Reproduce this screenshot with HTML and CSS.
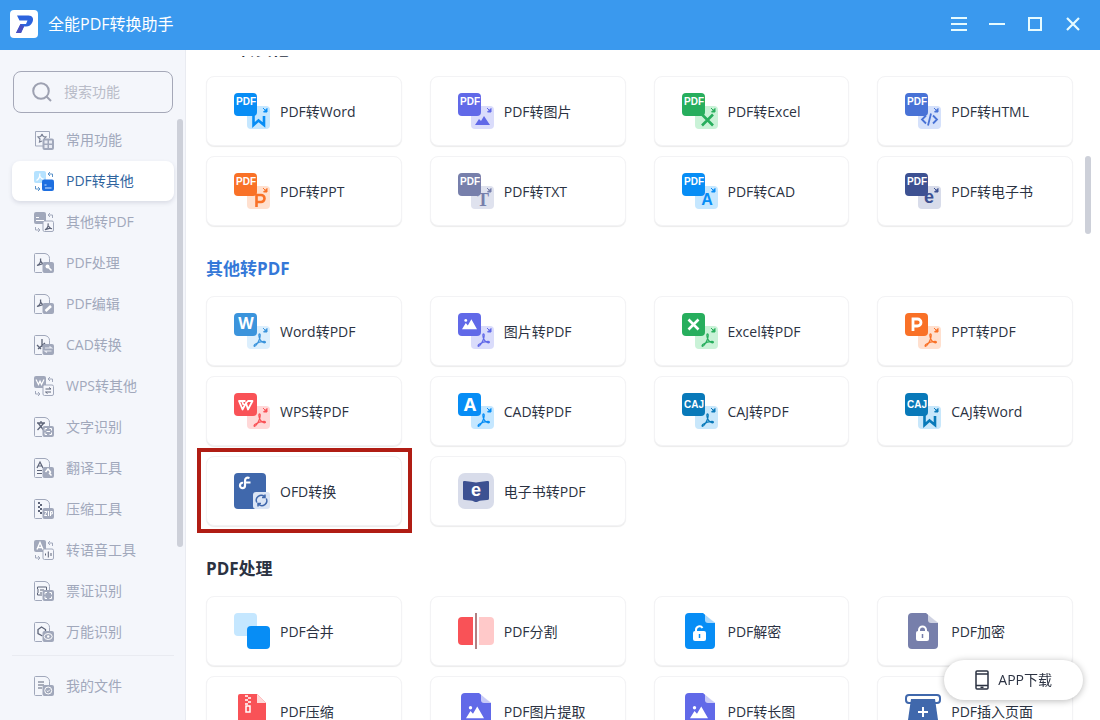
FILE: index.html
```html
<!DOCTYPE html>
<html lang="zh-CN">
<head>
    <meta charset="UTF-8">
    <meta name="viewport" content="width=device-width, initial-scale=1.0">
    <title>全能PDF转换助手</title>
    <link rel="stylesheet" href="styles.css">
</head>
<body>

    <!-- 图标 -->
    <svg class="sprite" aria-hidden="true">
        <symbol id="tile" viewBox="0 0 36 36">
            <rect class="pale" x="13" y="13" width="23" height="23" rx="4"/>
            <rect x="0" y="0" width="23" height="23" rx="4" fill="currentColor"/>
            <path d="M29 15l2.500 2.500M33 15.500v3.500h-3.500z" fill="currentColor" stroke="currentColor" stroke-width="1"/>
        </symbol>
        <symbol id="acrobat" viewBox="0 0 36 36">
            <path d="M25.800 21c-1.500-.5-1 3 .2 5.500 1 2 3 3.200 4.500 3.300 1.300 0 1.300-1.500-.5-1.500-3 0-6 .8-8.500 2.700-1.500 1-1.800 2.200-1 2.400 1.500 0 4-4.500 5-7.400.6-2 1-4.700.3-5z" fill="none" stroke="currentColor" stroke-width="1.200"/>
        </symbol>
        <symbol id="word" viewBox="0 0 36 36">
            <path d="M19.500 21.500V32l5-4.500 5.500 4.500V23" fill="none" stroke="currentColor" stroke-width="2.600"/>
        </symbol>
        <symbol id="hills" viewBox="0 0 16 12">
            <circle cx="4" cy="2.200" r="1.500" fill="currentColor"/>
            <path d="M0 11.500l4-6.500 2.200 2.600L10 1l6 10.500z" fill="currentColor"/>
        </symbol>
        <symbol id="sheet" viewBox="0 0 36 36">
            <path d="M7 0h14l12 10v22a4 4 0 0 1-4 4H7a4 4 0 0 1-4-4V4a4 4 0 0 1 4-4z" fill="currentColor"/>
            <path class="fold" d="M23 0l10 10h-7a3 3 0 0 1-3-3z"/>
        </symbol>
        <!-- 侧栏图标底板 -->
        <symbol id="s-doc" viewBox="0 0 20 20">
            <path d="M8 19.500H1.500a1 1 0 0 1-1-1v-17a1 1 0 0 1 1-1H11q4.500 1 4.500 5V9" fill="none" stroke="currentColor"/>
            <rect x="8.500" y="9" width="11.500" height="11" rx="2" fill="currentColor"/>
        </symbol>
        <symbol id="s-swap" viewBox="0 0 20 20">
            <rect x="0" y="0" width="12" height="12" rx="2" fill="currentColor"/>
            <path d="M14 3h4.500v3M16 1l-2 2 2 2M6 18H1.500v-3M4 16l2 2-2 2" fill="none" stroke="currentColor"/>
        </symbol>
        <symbol id="s-box" viewBox="0 0 20 20">
            <rect x="9" y="9" width="10.500" height="10.500" rx="1.500" fill="#f5f6fb" stroke="currentColor"/>
        </symbol>
        <symbol id="s-acro" viewBox="0 0 10 10">
            <path d="M1 8.500C4 7 5 4 4.500 1.500M5 4.500c1 2 2 3 4 3M1.500 8.500l6-2" fill="none" stroke="#5d6478" stroke-width="1.300"/>
        </symbol>
    </svg>

    <header class="titlebar">
        <svg class="logo" viewBox="0 0 28 28" aria-hidden="true">
            <rect width="28" height="28" rx="4" fill="#fff"/>
            <path d="M7 5.500h11.500c4 0 5.500 3 4 6.500-1.300 3-3.500 4.500-6.500 4.500h-2L11 23H6l4.500-9H16l1.500-3.500H9.500z" fill="#2d63dd"/>
            <path d="M10.500 14L6 23h5l3-6.500z" fill="#4b4fc0"/>
        </svg>
        <h1>全能PDF转换助手</h1>
        <div class="window-buttons">
            <button type="button" aria-label="菜单"><svg viewBox="0 0 16 16"><path d="M0 2h16M0 8h16M0 14h16" stroke-width="2.200"/></svg></button>
            <button type="button" aria-label="最小化"><svg viewBox="0 0 16 16"><path d="M0 8h16" stroke-width="2"/></svg></button>
            <button type="button" aria-label="最大化"><svg viewBox="0 0 16 16"><path d="M2 2h12v12H2z" stroke-width="2"/></svg></button>
            <button type="button" aria-label="关闭"><svg viewBox="0 0 16 16"><path d="M2 2l12 12M14 2L2 14" stroke-width="2.200"/></svg></button>
        </div>
    </header>

    <div class="layout">
        <aside class="sidebar">
            <label class="search">
                <svg viewBox="0 0 20 20" aria-hidden="true"><circle cx="9" cy="9" r="7.800"/><path d="M14.500 14.500l4.500 4.500"/></svg>
                <input type="text" placeholder="搜索功能" aria-label="搜索功能">
            </label>

            <nav class="menu">
                <a href="#common">
                    <svg viewBox="0 0 20 20"><path d="M9 16H1.500V1.500h14V8" fill="none" stroke="currentColor"/><path d="M8 4l1.300 2.500 2.700.4-2 2M8 4L6.700 6.500 4 7l2 2-.5 3L8 11" fill="none" stroke="#7b8296" stroke-width="1.200"/><rect x="8.500" y="8.500" width="11.500" height="11.500" rx="2" fill="currentColor"/><path d="M10.500 10.500h3v3h-3zM15 10.500h3v3h-3zM10.500 15h3v3h-3zM15 15h3v3h-3z" fill="#e9ebf3"/></svg>
                    常用功能
                </a>
                <a href="#from-pdf" class="active">
                    <svg viewBox="0 0 20 20"><rect width="12" height="12" rx="2" fill="#b5e2ff"/><path d="M2.500 9.500C5 8 6 5 5.800 2.500M6 5.500c1 2 2 2.500 4 2.800" fill="none" stroke="#fff" stroke-width="1.300"/><path d="M14 3h4.500v3M16 1l-2 2 2 2M6 18H1.500v-3M4 16l2 2-2 2" fill="none" stroke="#5b92c9"/><rect x="8" y="8.500" width="12" height="11.500" rx="2" fill="#1e6fe0"/><path d="M10.500 14h2M11 17h6.500" stroke="#d5e8ff"/></svg>
                    PDF转其他
                </a>
                <a href="#to-pdf">
                    <svg viewBox="0 0 20 20"><use href="#s-swap"/><use href="#s-box"/><path d="M2 5.500h3M2 8.500h8" stroke="#fff"/><use href="#s-acro" x="10" y="10" width="9" height="9"/></svg>
                    其他转PDF
                </a>
                <a href="#process">
                    <svg viewBox="0 0 20 20"><use href="#s-acro" x="2" y="4" width="10" height="10"/><use href="#s-doc"/><circle cx="13.500" cy="13.500" r="2" fill="#fff"/><path d="M14 14l3.500 3.500" stroke="#fff" stroke-width="1.600"/></svg>
                    PDF处理
                </a>
                <a href="#edit">
                    <svg viewBox="0 0 20 20"><use href="#s-acro" x="2" y="4" width="10" height="10"/><use href="#s-doc"/><path d="M11.500 17l5.500-5" stroke="#fff" stroke-width="2.600"/></svg>
                    PDF编辑
                </a>
                <a href="#cad">
                    <svg viewBox="0 0 20 20"><path d="M8 4v8M3 10l4 4M4 14l7-6" fill="none" stroke="#5d6478" stroke-width="1.300"/><use href="#s-doc"/><path d="M11 13h6.500l-2-1.500M17.500 16H11l2 1.500" fill="none" stroke="#e9ebf3" stroke-width="1.200"/></svg>
                    CAD转换
                </a>
                <a href="#wps">
                    <svg viewBox="0 0 20 20"><use href="#s-swap"/><use href="#s-box"/><path d="M2 3.500l2.500 5L6 5l1.500 3.500L10 3.500" fill="none" stroke="#fff" stroke-width="1.200"/><path d="M11.500 13H17l-2-1.500M17 16h-5.500l2 1.500" fill="none" stroke="#5d6478"/></svg>
                    WPS转其他
                </a>
                <a href="#ocr">
                    <svg viewBox="0 0 20 20"><path d="M3 6h8M7 4v2M4.500 6.500L9.500 13M9.500 6.500L3.500 13" stroke="#5d6478" stroke-width="1.300"/><use href="#s-doc"/><path d="M11 13.500V11.500h2M15.500 11.500h2v2M17.500 15.500v2h-2M13 17.500h-2v-2M12.500 14.500h3.500" fill="none" stroke="#fff"/></svg>
                    文字识别
                </a>
                <a href="#translate">
                    <svg viewBox="0 0 20 20"><path d="M3 10l3-6 3 6M4.200 8h3.600M3 12.500h5M3 15.500h5" fill="none" stroke="#5d6478" stroke-width="1.200"/><use href="#s-doc"/><path d="M11.500 14l2.500-3 2.500 3-1 1.500 2 2" fill="none" stroke="#fff" stroke-width="1.500"/></svg>
                    翻译工具
                </a>
                <a href="#compress">
                    <svg viewBox="0 0 20 20"><path d="M4 4h2M6 6h2M4 8h2M6 10h2M4 12h2M6 14h2" stroke="#5d6478" stroke-width="2"/><use href="#s-doc"/><path d="M10.500 12.500h2.500l-2.500 4H13M14.500 12v5M16.500 17v-4.500h1.800v2.500h-1.800" fill="none" stroke="#fff"/></svg>
                    压缩工具
                </a>
                <a href="#speech">
                    <svg viewBox="0 0 20 20"><use href="#s-swap"/><use href="#s-box"/><path d="M3 9.500l3-7 3 7M4.200 7.500h3.600" fill="none" stroke="#fff" stroke-width="1.400"/><path d="M11.500 13.500v2M14.300 11.500v6M17 13v3" stroke="#5d6478"/></svg>
                    转语音工具
                </a>
                <a href="#ticket">
                    <svg viewBox="0 0 20 20"><path d="M12.500 9V6H3.500v2l1 1-1 1 1 1-1 1v2H8M6 9h4M6 12h2" fill="none" stroke="#5d6478"/><use href="#s-doc"/><path d="M11 13.500V11.500h2M15.500 11.500h2v2M17.500 15.500v2h-2M13 17.500h-2v-2" fill="none" stroke="#fff"/></svg>
                    票证识别
                </a>
                <a href="#universal">
                    <svg viewBox="0 0 20 20"><path d="M8.500 14L4 11.500V7.500L7.500 5l4 2.500V9" fill="none" stroke="#5d6478" stroke-width="1.300"/><use href="#s-doc"/><ellipse cx="14.200" cy="14.500" rx="4" ry="3" fill="none" stroke="#fff"/><circle cx="14.200" cy="14.500" r="1.200" fill="#fff"/></svg>
                    万能识别
                </a>
            </nav>

            <div class="menu my-files">
                <a href="#files">
                    <svg viewBox="0 0 20 20"><path d="M4 6h6M4 9h6M4 12h4" stroke="#5d6478"/><use href="#s-doc"/><circle cx="14.200" cy="14.500" r="3.500" fill="none" stroke="#fff"/><path d="M12.700 14.500l1.200 1.200 2-2" fill="none" stroke="#fff"/></svg>
                    我的文件
                </a>
            </div>
            <div class="scrollbar side-bar"></div>
        </aside>

        <main class="content">
            <section class="scrolled" id="from-pdf">
                <h2>PDF转其他</h2>
                <div class="cards">
                    <button type="button" class="card azure">
                        <svg viewBox="0 0 36 36"><use href="#tile"/><text x="12" y="12">PDF</text><use href="#word"/></svg>
                        <span>PDF转Word</span>
                    </button>
                    <button type="button" class="card indigo">
                        <svg viewBox="0 0 36 36"><use href="#tile"/><text x="12" y="12">PDF</text><path d="M17 32l4-6 2 2 3-5 6 9z" fill="currentColor"/></svg>
                        <span>PDF转图片</span>
                    </button>
                    <button type="button" class="card green">
                        <svg viewBox="0 0 36 36"><use href="#tile"/><text x="12" y="12">PDF</text><path d="M20 21.500l11 11M31 21.500l-11 11" stroke="currentColor" stroke-width="2.600"/></svg>
                        <span>PDF转Excel</span>
                    </button>
                    <button type="button" class="card blue">
                        <svg viewBox="0 0 36 36"><use href="#tile"/><text x="12" y="12">PDF</text><path d="M21 22.500l-4 4 4 4M28 22.500l4 4-4 4M26 20.500l-3 12" fill="none" stroke="currentColor" stroke-width="1.800"/></svg>
                        <span>PDF转HTML</span>
                    </button>
                    <button type="button" class="card orange">
                        <svg viewBox="0 0 36 36"><use href="#tile"/><text x="12" y="12">PDF</text><path d="M22.500 34V22H27a3.500 3.500 0 0 1 0 7h-4" fill="none" stroke="currentColor" stroke-width="2.600"/></svg>
                        <span>PDF转PPT</span>
                    </button>
                    <button type="button" class="card slate">
                        <svg viewBox="0 0 36 36"><use href="#tile"/><text x="12" y="12">PDF</text><text class="glyph serif" x="25" y="33">T</text></svg>
                        <span>PDF转TXT</span>
                    </button>
                    <button type="button" class="card azure">
                        <svg viewBox="0 0 36 36"><use href="#tile"/><text x="12" y="12">PDF</text><text class="glyph" x="25" y="32">A</text></svg>
                        <span>PDF转CAD</span>
                    </button>
                    <button type="button" class="card navy">
                        <svg viewBox="0 0 36 36"><use href="#tile"/><text x="12" y="12">PDF</text><text class="glyph round" x="24" y="30">e</text></svg>
                        <span>PDF转电子书</span>
                    </button>
                </div>
            </section>

            <section id="to-pdf">
                <h2 class="current">其他转PDF</h2>
                <div class="cards">
                    <button type="button" class="card sky">
                        <svg viewBox="0 0 36 36"><use href="#tile"/><text class="letter" x="12" y="16">W</text><use href="#acrobat"/></svg>
                        <span>Word转PDF</span>
                    </button>
                    <button type="button" class="card indigo">
                        <svg viewBox="0 0 36 36"><use href="#tile"/><use class="white" href="#hills" x="4" y="5" width="15" height="12"/><use href="#acrobat"/></svg>
                        <span>图片转PDF</span>
                    </button>
                    <button type="button" class="card green">
                        <svg viewBox="0 0 36 36"><use href="#tile"/><path d="M6.500 6.500l10 10M16.500 6.500l-10 10" stroke="#fff" stroke-width="2.600"/><use href="#acrobat"/></svg>
                        <span>Excel转PDF</span>
                    </button>
                    <button type="button" class="card orange">
                        <svg viewBox="0 0 36 36"><use href="#tile"/><path d="M8 18V6h4.500a3.500 3.500 0 0 1 0 7H8" fill="none" stroke="#fff" stroke-width="2.800"/><use href="#acrobat"/></svg>
                        <span>PPT转PDF</span>
                    </button>
                    <button type="button" class="card red">
                        <svg viewBox="0 0 36 36"><use href="#tile"/><path d="M11.500 8H5l3.500 8.500L12 10l2 6.500L18.500 8H14l-2.200 2.500M8 8l1.500 4" fill="none" stroke="#fff" stroke-width="1.800" stroke-linejoin="round"/><use href="#acrobat"/></svg>
                        <span>WPS转PDF</span>
                    </button>
                    <button type="button" class="card azure">
                        <svg viewBox="0 0 36 36"><use href="#tile"/><text class="letter wide" x="12" y="18">A</text><use href="#acrobat"/></svg>
                        <span>CAD转PDF</span>
                    </button>
                    <button type="button" class="card teal">
                        <svg viewBox="0 0 36 36"><use href="#tile"/><text x="12" y="15">CAJ</text><use href="#acrobat"/></svg>
                        <span>CAJ转PDF</span>
                    </button>
                    <button type="button" class="card teal">
                        <svg viewBox="0 0 36 36"><use href="#tile"/><text x="12" y="15">CAJ</text><use href="#word"/></svg>
                        <span>CAJ转Word</span>
                    </button>
                    <button type="button" class="card steel marked">
                        <svg viewBox="0 0 36 36"><rect width="32" height="36" rx="4" fill="currentColor"/><path d="M15.500 5c-3-1-4.500.5-4.500 3v4.500c0 3.500-5 3.500-5 0 0-2 1.500-3 3-2.500M11 9.500h5.500" fill="none" stroke="#fff" stroke-width="2.200"/><rect class="pale" x="19" y="19" width="17" height="17" rx="3"/><path d="M22.800 29.500a5 5 0 0 1 7.700-6M32.300 25.500a5 5 0 0 1-7.700 6M31 21.500v3h-3M24 33.500v-3h3" fill="none" stroke="currentColor" stroke-width="1.500"/></svg>
                        <span>OFD转换</span>
                    </button>
                    <button type="button" class="card navy">
                        <svg viewBox="0 0 36 36"><rect class="pale" width="36" height="36" rx="7"/><path d="M5 9q0-1.500 2-1 6 .5 11 1.500 5-1 11-1.500 2-.5 2 1v16.500q0 1.500-2 1.500-6 0-9 1.500-2 1-4 0-3-1.500-9-1.500-2 0-2-1.500z" fill="currentColor"/><text class="letter round" x="18" y="23">e</text></svg>
                        <span>电子书转PDF</span>
                    </button>
                </div>
            </section>

            <section id="process">
                <h2>PDF处理</h2>
                <div class="cards">
                    <button type="button" class="card azure">
                        <svg viewBox="0 0 36 36"><rect class="pale" width="23" height="23" rx="4"/><rect x="13" y="13" width="23" height="23" rx="4" fill="currentColor"/></svg>
                        <span>PDF合并</span>
                    </button>
                    <button type="button" class="card red">
                        <svg viewBox="0 0 36 36"><path d="M15 4v28H4a4 4 0 0 1-4-4V8a4 4 0 0 1 4-4z" fill="currentColor"/><path d="M21 4v28h11a4 4 0 0 0 4-4V8a4 4 0 0 0-4-4z" fill="#ffc9c9"/><path d="M18 0v36" stroke="#b18083" stroke-width="2"/></svg>
                        <span>PDF分割</span>
                    </button>
                    <button type="button" class="card azure">
                        <svg viewBox="0 0 36 36"><use href="#sheet"/><rect x="11" y="18" width="13" height="10" rx="2" fill="#fff"/><path d="M14 18v-1a3.500 3.500 0 0 1 6.500-2" fill="none" stroke="#fff" stroke-width="2"/><path d="M17.500 21v4" stroke="currentColor" stroke-width="1.500"/></svg>
                        <span>PDF解密</span>
                    </button>
                    <button type="button" class="card slate">
                        <svg viewBox="0 0 36 36"><use href="#sheet"/><rect x="11" y="18" width="13" height="10" rx="2" fill="#fff"/><path d="M14 18v-1a3.500 3.500 0 0 1 7 0v1" fill="none" stroke="#fff" stroke-width="2"/><path d="M17.500 21v4" stroke="currentColor" stroke-width="1.500"/></svg>
                        <span>PDF加密</span>
                    </button>
                    <button type="button" class="card red">
                        <svg viewBox="0 0 36 36"><path d="M6 1h17l9 9v23a2 2 0 0 1-2 2H6a2 2 0 0 1-2-2V3a2 2 0 0 1 2-2z" fill="currentColor"/><path d="M23 1l9 9h-9z" fill="#ffd9d9"/><path d="M11 3h3M14 5h3M11 7h3M14 9h3M11 11h3" stroke="#fff" stroke-width="1.500"/><path d="M12 13h4v6h-4z" fill="none" stroke="#fff" stroke-width="1.500"/></svg>
                        <span>PDF压缩</span>
                    </button>
                    <button type="button" class="card indigo">
                        <svg viewBox="0 0 36 36"><use href="#sheet"/><use class="white" href="#hills" x="8" y="12" width="18" height="14"/></svg>
                        <span>PDF图片提取</span>
                    </button>
                    <button type="button" class="card indigo">
                        <svg viewBox="0 0 36 36"><use href="#sheet"/><use class="white" href="#hills" x="8" y="12" width="18" height="14"/></svg>
                        <span>PDF转长图</span>
                    </button>
                    <button type="button" class="card steel">
                        <svg viewBox="0 0 36 36"><rect x="1" y="2" width="34" height="8" rx="3" fill="#fff" stroke="currentColor" stroke-width="2"/><path d="M6 6h24l4 28H2z" fill="currentColor"/><path d="M18 14v10M13 19h10" stroke="#fff" stroke-width="2"/></svg>
                        <span>PDF插入页面</span>
                    </button>
                </div>
            </section>
            <div class="scrollbar main-bar"></div>
        </main>
    </div>

    <button type="button" class="app-download">
        <svg viewBox="0 0 14 20" aria-hidden="true"><path d="M2 1h10a1 1 0 0 1 1 1v16a1 1 0 0 1-1 1H2a1 1 0 0 1-1-1V2a1 1 0 0 1 1-1zM1 4h12M1 15.500h12" fill="none" stroke="currentColor" stroke-width="1.500"/><path d="M5.500 17.300h3" stroke="currentColor" stroke-width="1.500"/></svg>
        APP下载
    </button>

</body>
</html>
```
FILE: styles.css
```css
* {
    box-sizing: border-box;
}

body {
    margin: 0;
    height: 100vh;
    display: flex;
    flex-direction: column;
    overflow: hidden;
    background-color: #fff;
    color: #2b3242;
    font-family: "Open Sans", "Noto Sans CJK SC", sans-serif;
    font-size: 14px;
    line-height: 20px;
}

button,
input {
    font: inherit;
    color: inherit;
}

button {
    border: none;
    padding: 0;
    background: none;
    cursor: pointer;
}

svg {
    flex: none;
}

.sprite {
    position: absolute;
    width: 0;
    height: 0;
}

/* 标题栏 */
.titlebar {
    flex: none;
    display: flex;
    align-items: center;
    height: 50px;
    padding: 0 8px 2px 10px;
    background-color: #3a99ee;
    color: #fff;
}

.logo {
    width: 28px;
    height: 28px;
}

.titlebar h1 {
    margin: 0 0 0 10px;
    font-size: 16px;
    font-weight: 400;
}

.window-buttons {
    display: flex;
    margin-left: auto;
}

.window-buttons button {
    display: flex;
    align-items: center;
    justify-content: center;
    width: 38px;
    height: 48px;
}

.window-buttons svg {
    width: 16px;
    height: 16px;
    fill: none;
    stroke: #e6fbff;
}

.layout {
    flex: 1;
    display: flex;
    min-height: 0;
}

/* 侧栏 */
.sidebar {
    position: relative;
    flex: none;
    width: 186px;
    padding: 21px 11px 0 12px;
    background-color: #f4f6fb;
    border-right: 1px solid #e9ebf1;
}

.search {
    display: flex;
    align-items: center;
    gap: 12px;
    height: 42px;
    margin: 0 1px 7px;
    padding: 0 18px;
    border: 1px solid #a5a8b8;
    border-radius: 8px;
}

.search svg {
    width: 20px;
    height: 20px;
    fill: none;
    stroke: #9da1b1;
    stroke-width: 2;
}

.search input {
    width: 100%;
    min-width: 0;
    padding: 0;
    border: none;
    outline: none;
    background: none;
}

.search input::placeholder {
    color: #b9bcc8;
}

.menu {
    display: flex;
    flex-direction: column;
    gap: 1px;
}

.menu a {
    display: flex;
    align-items: center;
    gap: 12px;
    height: 40px;
    padding: 0 0 0 22px;
    border-radius: 8px;
    color: #a1a8bb;
    text-decoration: none;
}

.menu a.active {
    background-color: #fff;
    box-shadow: 0 2px 4px rgba(60, 70, 100, 0.15);
    color: #2f649e;
}

.menu svg {
    width: 20px;
    height: 20px;
}

.my-files {
    margin-top: 3px;
    padding-top: 10px;
    border-top: 1px solid #e9ebf1;
}

.scrollbar {
    position: absolute;
    width: 6px;
    border-radius: 3px;
    background-color: #cdd0d9;
}

.side-bar {
    top: 69px;
    right: 2px;
    height: 428px;
}

.main-bar {
    top: 100px;
    right: 9px;
    height: 78px;
}

/* 功能列表 */
.content {
    position: relative;
    flex: 1;
    min-width: 0;
    margin-top: 6px;
    padding: 0 27px 0 20px;
    overflow: hidden;
}

.scrolled {
    margin-top: -50px;
}

h2 {
    margin: 0;
    padding: 30px 0 14px;
    font-size: 17px;
    line-height: 26px;
    font-weight: 700;
}

h2.current {
    color: #3478d8;
}

.cards {
    display: grid;
    grid-template-columns: repeat(4, 1fr);
    gap: 10px 28px;
}

.card {
    position: relative;
    display: flex;
    align-items: center;
    gap: 10px;
    height: 70px;
    padding: 0 0 0 27px;
    border: 1px solid #f3f3f5;
    border-radius: 8px;
    background-color: #fff;
    box-shadow: 0 1px 1px rgba(0, 0, 0, 0.08);
    white-space: nowrap;
}

.card span {
    padding-top: 2px;
}

.card svg {
    width: 36px;
    height: 36px;
    color: var(--main);
}

.card text {
    fill: #fff;
    font-family: "Liberation Sans", sans-serif;
    font-size: 10px;
    font-weight: 700;
    text-anchor: middle;
}

.card .letter {
    font-family: "Open Sans", sans-serif;
    font-size: 16px;
}

.card .wide {
    font-size: 18px;
}

.card .glyph {
    fill: var(--main);
    font-size: 16px;
}

.card .serif {
    font-family: "Liberation Serif", serif;
    font-size: 18px;
}

.card .round {
    font-family: "Liberation Sans", sans-serif;
    font-size: 18px;
}

.pale {
    fill: var(--pale);
}

.fold {
    fill: #fff;
    fill-opacity: 0.65;
}

.card .white {
    color: #fff;
}

.azure { --main: #078df5; --pale: #c5e7ff; }
.indigo { --main: #6169e8; --pale: #dadcfb; }
.green { --main: #27ae5d; --pale: #c9f2d7; }
.blue { --main: #4872d6; --pale: #d5e1fb; }
.orange { --main: #f97127; --pale: #ffe0cf; }
.slate { --main: #777fab; --pale: #dfe2ee; }
.navy { --main: #3d5192; --pale: #d8dcea; }
.sky { --main: #3b94dc; --pale: #dceffd; }
.red { --main: #f95257; --pale: #ffd8d8; }
.teal { --main: #0879b9; --pale: #c8e7fb; }
.steel { --main: #4068ac; --pale: #dbe5f5; }

/* 红框标出的功能 */
.marked::after {
    content: "";
    position: absolute;
    inset: -9px -11px -8px -10px;
    border: 4px solid #b01d14;
}

.app-download {
    position: fixed;
    right: 17px;
    bottom: 20px;
    display: flex;
    align-items: center;
    gap: 8px;
    height: 40px;
    padding: 0 31px 0 30px;
    border-radius: 20px;
    background-color: #fff;
    box-shadow: 0 1px 7px rgba(0, 0, 0, 0.28);
}

.app-download svg {
    width: 16px;
    height: 20px;
}
```
